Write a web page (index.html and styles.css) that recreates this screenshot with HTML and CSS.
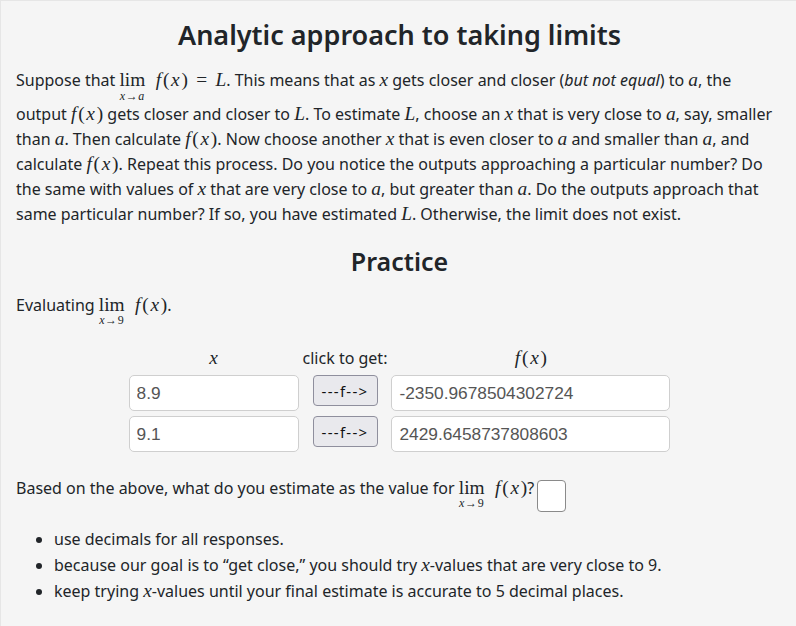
FILE: index.html
```html
<!DOCTYPE html>
<html lang="en">
<head>
    <meta charset="UTF-8">
    <meta name="viewport" content="width=device-width, initial-scale=1.0">
    <title>Analytic approach to taking limits</title>
    <link rel="stylesheet" href="styles.css">
</head>
<body>
    <div class="page">
        <h1>Analytic approach to taking limits</h1>
        <p class="intro">
            Suppose that <span class="math"><span class="lim"><span class="op">lim</span><span class="under"><i>x</i>→<i>a</i></span></span> <i>f</i>(<i>x</i>) = <i>L</i></span>.
            This means that as <span class="math"><i>x</i></span> gets closer and closer (<em>but not equal</em>) to <span class="math"><i>a</i></span>, the
            output <span class="math"><i>f</i>(<i>x</i>)</span> gets closer and closer to <span class="math"><i>L</i></span>.
            To estimate <span class="math"><i>L</i></span>, choose an <span class="math"><i>x</i></span> that is very close to <span class="math"><i>a</i></span>, say, smaller
            than <span class="math"><i>a</i></span>. Then calculate <span class="math"><i>f</i>(<i>x</i>)</span>.
            Now choose another <span class="math"><i>x</i></span> that is even closer to <span class="math"><i>a</i></span> and smaller than <span class="math"><i>a</i></span>, and
            calculate <span class="math"><i>f</i>(<i>x</i>)</span>. Repeat this process. Do you notice the outputs approaching a particular number? Do
            the same with values of <span class="math"><i>x</i></span> that are very close to <span class="math"><i>a</i></span>, but greater than <span class="math"><i>a</i></span>.
            Do the outputs approach that same particular number? If so, you have estimated <span class="math"><i>L</i></span>. Otherwise, the limit does not exist.
        </p>

        <h2>Practice</h2>

        <p class="evaluating">
            Evaluating <span class="math"><span class="lim"><span class="op">lim</span><span class="under"><i>x</i>→9</span></span> <i>f</i>(<i>x</i>)</span>.
        </p>

        <div class="grid">
            <div class="head"><span class="math"><i>x</i></span></div>
            <div class="head">click to get:</div>
            <div class="head"><span class="math"><i>f</i>(<i>x</i>)</span></div>

            <input class="field" type="text" value="8.9">
            <button type="button" class="fbutton">---f--&gt;</button>
            <input class="field" type="text" value="-2350.9678504302724">

            <input class="field" type="text" value="9.1">
            <button type="button" class="fbutton">---f--&gt;</button>
            <input class="field" type="text" value="2429.6458737808603">
        </div>

        <p class="estimate">
            Based on the above, what do you estimate as the value for
            <span class="math"><span class="lim"><span class="op">lim</span><span class="under"><i>x</i>→9</span></span> <i>f</i>(<i>x</i>)</span>?<input class="answer" type="text">
        </p>

        <ul class="notes">
            <li>use decimals for all responses.</li>
            <li>because our goal is to “get close,” you should try <span class="math"><i>x</i></span>-values that are very close to 9.</li>
            <li>keep trying <span class="math"><i>x</i></span>-values until your final estimate is accurate to 5 decimal places.</li>
        </ul>
    </div>
</body>
</html>
```

FILE: styles.css
```css
body {
    margin: 0;
    background-color: #f5f5f5;
    color: #212529;
    font-family: "Noto Sans", "Open Sans", sans-serif;
    font-size: 16px;
    line-height: 1.5;
}
.page {
    box-sizing: border-box;
    min-height: 100vh;
    border-top: 1px solid #e6e6e6;
    border-left: 1px solid #e6e6e6;
    padding: 18px 13px 10px 15px;
}
h1 {
    text-align: center;
    font-size: 27px;
    font-weight: 600;
    margin: 0 0 17px;
    line-height: 1.2;
}
h2 {
    text-align: center;
    font-size: 25px;
    font-weight: 600;
    margin: 19px 0 16px;
    line-height: 1.2;
}
p {
    margin: 0 0 16px;
}
.intro {
    line-height: 25px;
}
.math {
    font-family: "Liberation Serif", "Times New Roman", serif;
    font-size: 1.21em;
    line-height: 1;
    letter-spacing: 0.09em;
    margin-right: -0.09em;
    white-space: nowrap;
}
.math i {
    font-style: italic;
}
.lim {
    display: inline-flex;
    flex-direction: column;
    align-items: center;
    letter-spacing: 0;
    margin-right: 0.2em;
}
.lim .op {
    line-height: 1;
}
.lim .under {
    font-size: 0.62em;
    line-height: 1;
    letter-spacing: 0.05em;
}
.evaluating {
    margin-top: 17px;
    margin-bottom: 21px;
}
.grid {
    display: grid;
    grid-template-columns: 170px auto 279px;
    column-gap: 4px;
    row-gap: 5px;
    justify-content: center;
    align-items: start;
}
.head {
    text-align: center;
    line-height: 23px;
}
.field {
    box-sizing: border-box;
    height: 36px;
    padding: 0 7px;
    border: 1px solid #cfcfcf;
    border-radius: 5px;
    background-color: #fff;
    color: #555;
    font-family: "Liberation Sans", Arial, sans-serif;
    font-size: 17.3px;
}
.fbutton {
    justify-self: center;
    box-sizing: border-box;
    width: 65px;
    height: 31px;
    border: 1px solid #8f8f9d;
    border-radius: 4px;
    background-color: #e9e9ed;
    color: #111;
    font-family: "Noto Sans", sans-serif;
    font-size: 15px;
    letter-spacing: 1.3px;
    padding: 0;
}
.estimate {
    margin-top: 24px;
    margin-bottom: 14px;
}
.answer {
    box-sizing: border-box;
    width: 29px;
    height: 32px;
    margin-left: 3px;
    border: 1px solid #8a8a8a;
    border-radius: 4px;
    background-color: #fff;
    vertical-align: -6px;
}
.notes {
    margin: 0;
    padding-left: 38px;
    line-height: 26px;
}
```
